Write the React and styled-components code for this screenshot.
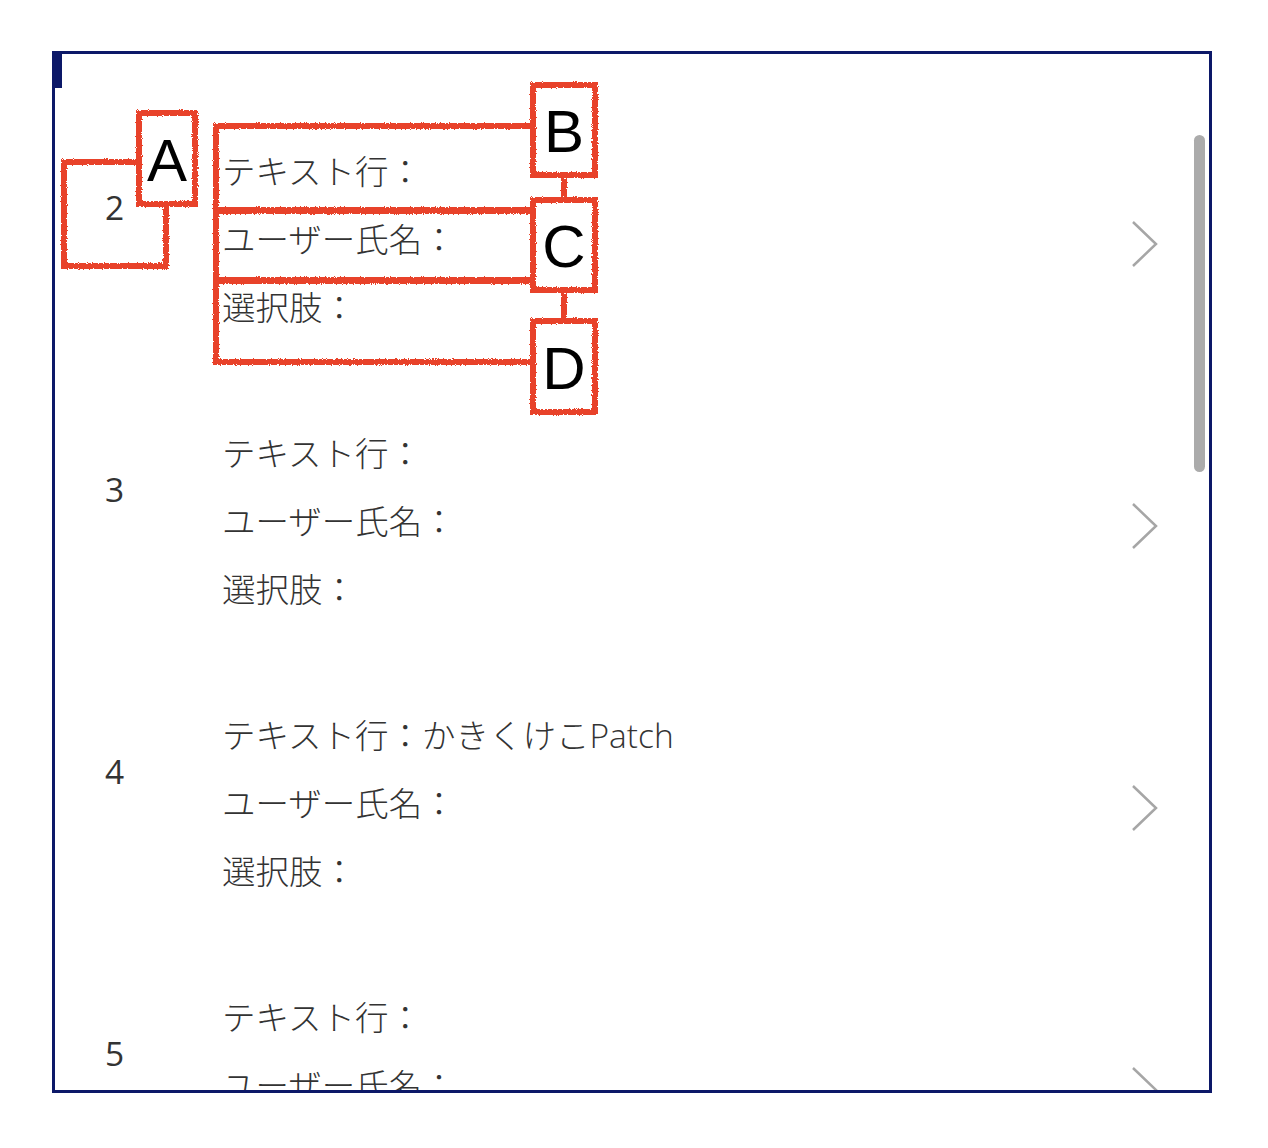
import styled, { createGlobalStyle } from "styled-components"

const GlobalStyle = createGlobalStyle`
  html, body {
    margin: 0;
    padding: 0;
    background: #fff;
  }
  body {
    font-family: "Open Sans", "Noto Sans CJK JP", sans-serif;
    color: #333;
  }
`

const Page = styled.div`
  position: relative;
  width: 1268px;
  height: 1148px;
  padding: 51px 0 0 52px;
  box-sizing: border-box;
`

const Frame = styled.div`
  position: relative;
  width: 1160px;
  height: 1042px;
  box-sizing: border-box;
  border: 3px solid #0c1868;
  overflow: hidden;
  background: #fff;
`

// last bit of item 1, scrolled almost out of view (the selected one)
const RowTail = styled.div`
  height: 34px;
  box-shadow: ${p => (p.$selected ? "inset 7px 0 0 #0c1868" : "none")};
`

const Row = styled.div`
  height: 282px;
  display: grid;
  grid-template-columns: 167px 1fr 30px;
  padding-right: 49px;
`

const Num = styled.div`
  padding: 85px 0 0 50px;
  font-size: 33.5px;
  line-height: 68px;
`

const Fields = styled.div`
  padding-top: 49px;
  font-size: 33.5px;
  font-weight: 300;
  line-height: 68px;
  white-space: nowrap;
`

const Field = styled.div``

const Chevron = styled.div`
  padding-top: 132px;
  svg {
    display: block;
  }
`

const Scrollbar = styled.div`
  position: absolute;
  right: 4px;
  top: 81px;
  width: 11px;
  height: 337px;
  border-radius: 6px;
  background: #ababab;
`

/* hand drawn callouts lying over the screenshot */
const red = "#e8432a"

const Callout = styled.div`
  position: absolute;
  left: ${p => p.$x}px;
  top: ${p => p.$y}px;
  display: flex;
  flex-direction: column;
  z-index: ${p => p.$z || 2};
`

const Box = styled.div`
  position: relative;
  box-sizing: border-box;
  width: ${p => p.$w}px;
  height: ${p => p.$h}px;
  margin-top: ${p => p.$overlap || 0}px;
  &::before {
    content: "";
    position: absolute;
    inset: 0;
    border: 6px solid ${red};
    border-right-width: ${p => (p.$open ? 0 : 6)}px;
    filter: url(#crayon);
  }
`

const Label = styled.div`
  position: relative;
  box-sizing: border-box;
  width: ${p => p.$w || 68}px;
  height: ${p => p.$h || 96}px;
  background: #fff;
  display: flex;
  align-items: center;
  justify-content: center;
  padding-top: 4px;
  font-family: "Liberation Sans", Arial, sans-serif;
  font-size: 60px;
  line-height: 1;
  color: #000;
  &::before {
    content: "";
    position: absolute;
    inset: 0;
    border: 6px solid ${red};
    filter: url(#crayon);
  }
`

const Stem = styled.div`
  align-self: center;
  width: 6px;
  height: ${p => p.$h}px;
  background: ${red};
  filter: url(#crayon);
`

const NumCallout = styled.div`
  position: absolute;
  left: 61px;
  top: 110px;
  display: grid;
  grid-template-columns: 75px 62px;
  grid-template-rows: 49px 48px 62px;
  z-index: 2;
  ${Box} {
    grid-column: 1 / 3;
    grid-row: 2 / 4;
    width: 108px;
    height: 110px;
  }
  ${Label} {
    grid-column: 2;
    grid-row: 1 / 3;
    z-index: 1;
  }
`

const FilterDefs = styled.svg`
  position: absolute;
  width: 0;
  height: 0;
`

const rows = [
  { n: 2, text: "" },
  { n: 3, text: "" },
  { n: 4, text: "かきくけこPatch" },
  { n: 5, text: "" },
]

const ChevronIcon = () => (
  <svg width="30" height="48" viewBox="0 0 30 48">
    <polyline points="3,2 26,24 3,46" fill="none" stroke="#a6a6a6" strokeWidth="2.5" />
  </svg>
)

const App = () => {
  return (
    <Page>
      <GlobalStyle />
      <FilterDefs>
        <filter id="crayon">
          <feTurbulence type="fractalNoise" baseFrequency="1.2" numOctaves="2" result="noise" />
          <feDisplacementMap in="SourceGraphic" in2="noise" scale="3.5" />
        </filter>
      </FilterDefs>
      <Frame>
        <RowTail $selected />
        {rows.map(r => (
          <Row key={r.n}>
            <Num>{r.n}</Num>
            <Fields>
              <Field>テキスト行：{r.text}</Field>
              <Field>ユーザー氏名：</Field>
              <Field>選択肢：</Field>
            </Fields>
            <Chevron>
              <ChevronIcon />
            </Chevron>
          </Row>
        ))}
        <Scrollbar />
      </Frame>

      <NumCallout>
        <Label $w={62} $h={97}>A</Label>
        <Box />
      </NumCallout>

      <Callout $x={213} $y={123}>
        <Box $w={320} $h={91} $open />
        <Box $w={320} $h={77} $overlap={-7} $open />
        <Box $w={320} $h={88} $overlap={-7} $open />
      </Callout>

      <Callout $x={530} $y={82} $z={3}>
        <Label>B</Label>
        <Stem $h={19} />
        <Label>C</Label>
        <Stem $h={25} />
        <Label $h={97}>D</Label>
      </Callout>
    </Page>
  )
}

export default App
